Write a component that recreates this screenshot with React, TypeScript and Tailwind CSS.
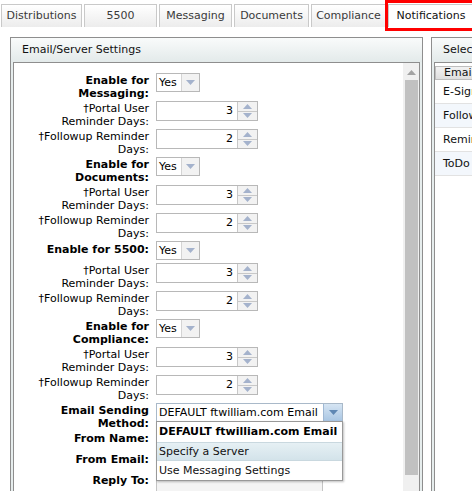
import React from 'react'

type Row = {
  label: React.ReactNode
  bold?: boolean
  kind: 'yes' | 'num' | 'method' | 'text'
  value?: number
  tall?: boolean
}

const rows: Row[] = [
  { label: <>Enable for<br />Messaging:</>, bold: true, kind: 'yes', tall: true },
  { label: <>†Portal User<br />Reminder Days:</>, kind: 'num', value: 3, tall: true },
  { label: <>†Followup Reminder<br />Days:</>, kind: 'num', value: 2, tall: true },
  { label: <>Enable for<br />Documents:</>, bold: true, kind: 'yes', tall: true },
  { label: <>†Portal User<br />Reminder Days:</>, kind: 'num', value: 3, tall: true },
  { label: <>†Followup Reminder<br />Days:</>, kind: 'num', value: 2, tall: true },
  { label: <>Enable for 5500:</>, bold: true, kind: 'yes' },
  { label: <>†Portal User<br />Reminder Days:</>, kind: 'num', value: 3, tall: true },
  { label: <>†Followup Reminder<br />Days:</>, kind: 'num', value: 2, tall: true },
  { label: <>Enable for<br />Compliance:</>, bold: true, kind: 'yes', tall: true },
  { label: <>†Portal User<br />Reminder Days:</>, kind: 'num', value: 3, tall: true },
  { label: <>†Followup Reminder<br />Days:</>, kind: 'num', value: 2, tall: true },
  { label: <>Email Sending<br />Method:</>, bold: true, kind: 'method', tall: true },
  { label: <>From Name:</>, bold: true, kind: 'text' },
  { label: <>From Email:</>, bold: true, kind: 'text' },
  { label: <>Reply To:</>, bold: true, kind: 'text' },
]

const tabs = [
  { name: 'Distributions', w: 'w-[81px]' },
  { name: '5500', w: 'w-[73px]' },
  { name: 'Messaging', w: 'w-[73px]' },
  { name: 'Documents', w: 'w-[75px]' },
  { name: 'Compliance', w: 'w-[75px]' },
]

function Arrow({ up, color = '#a4b2cc' }: { up?: boolean; color?: string }) {
  return (
    <svg width="9" height="5" viewBox="0 0 9 5">
      <path d={up ? 'M0 5 L4.5 0 L9 5 Z' : 'M0 0 L9 0 L4.5 5 Z'} fill={color} />
    </svg>
  )
}

function YesSelect() {
  return (
    <div className="flex h-[19px] w-[44px] border border-[#b8b8b8] bg-white">
      <div className="flex-1 pl-[2px] leading-[17px] text-[#000]">Yes</div>
      <div className="flex w-[18px] items-center justify-center border-l border-[#d4d4d4] bg-[#f2f2f2]">
        <Arrow />
      </div>
    </div>
  )
}

function Spinner({ value }: { value?: number }) {
  return (
    <div className="flex h-[20px] w-[102px] border border-[#b8b8b8] bg-white">
      <div className="flex-1 pr-[4px] text-right leading-[18px] text-[#000]">{value}</div>
      <div className="flex w-[20px] flex-col border-l border-[#c8c8c8]">
        <div className="flex flex-1 items-center justify-center border-b border-[#c8c8c8] bg-[#f2f2f2]">
          <Arrow up />
        </div>
        <div className="flex flex-1 items-center justify-center bg-[#f2f2f2]">
          <Arrow />
        </div>
      </div>
    </div>
  )
}

function MethodSelect() {
  return (
    <div className="relative">
      <div className="flex h-[19px] w-[187px] border border-[#a9b9c9] bg-white">
        <div className="flex-1 pl-[2px] leading-[17px] text-[#000]">DEFAULT ftwilliam.com Email</div>
        <div className="flex w-[19px] items-center justify-center border-l border-[#9fb8d4] bg-gradient-to-b from-[#d6e5f3] to-[#a9c6e3]">
          <Arrow color="#5f87b3" />
        </div>
      </div>
      {/* open dropdown list */}
      <div className="absolute left-0 top-[18px] z-10 w-[187px] border border-[#999] bg-white shadow-[1px_1px_2px_rgba(0,0,0,0.25)]">
        <div className="h-[20px] pl-[2px] font-bold leading-[19px] text-[#000]">DEFAULT ftwilliam.com Email</div>
        <div className="h-[19px] border-y border-[#c9d8df] bg-gradient-to-b from-[#e6f0f4] to-[#d3e3ea] pl-[2px] leading-[17px] text-[#111]">
          Specify a Server
        </div>
        <div className="h-[19px] pl-[2px] leading-[19px] text-[#111]">Use Messaging Settings</div>
      </div>
    </div>
  )
}

function Control({ row }: { row: Row }) {
  if (row.kind === 'yes') return <YesSelect />
  if (row.kind === 'num') return <Spinner value={row.value} />
  if (row.kind === 'method') return <MethodSelect />
  return <div className="h-[20px] w-[167px] border border-[#c4c4c4] bg-[#f4f4f4]" />
}

export default function App() {
  return (
    <div className="relative h-[491px] w-[472px] overflow-hidden bg-white font-['DejaVu_Sans',sans-serif] text-[11px]">
      {/* Tabs */}
      <div className="flex gap-[2px] pl-[1px] pt-[4px]">
        {tabs.map((t) => (
          <div
            key={t.name}
            className={`${t.w} flex h-[23px] shrink-0 items-center justify-center border border-b-0 border-[#c9c9c9] bg-gradient-to-b from-white to-[#ececec] text-[#3a3a3a]`}
          >
            {t.name}
          </div>
        ))}
        <div className="relative shrink-0">
          <div className="flex h-[23px] w-[86px] items-center justify-center border border-b-0 border-[#c9c9c9] bg-white text-[#111]">
            Notifications
          </div>
          <div className="pointer-events-none absolute left-[-3px] top-[-4px] h-[31px] w-[92px] border-[3px] border-[#ff0000]" />
        </div>
      </div>

      {/* Panels */}
      <div className="mt-[10px] flex gap-[8px] pl-[10px]">
        {/* Left panel */}
        <div className="flex h-[470px] w-[413px] shrink-0 flex-col border border-[#8e8e8e] bg-[#e6eded]">
          <div className="h-[24px] bg-gradient-to-b from-[#f9fbfb] to-[#e3eaea] pl-[11px] leading-[24px] text-[#111]">
            Email/Server Settings
          </div>
          <div className="mx-[2px] flex flex-1 border border-[#8e8e8e] bg-white">
            <div className="flex-1 pt-[10px]">
              {rows.map((row, i) => (
                <div
                  key={i}
                  className={`flex items-start gap-[7px] ${
                    row.tall ? 'h-[28px]' : row.kind === 'text' ? 'h-[21px]' : 'h-[22px]'
                  }`}
                >
                  <div
                    className={`w-[135px] text-right leading-[13px] text-[#000] ${row.bold ? 'font-bold' : ''} ${
                      row.tall || row.kind === 'text' ? 'pt-[1px]' : 'pt-[2px]'
                    }`}
                  >
                    {row.label}
                  </div>
                  <Control row={row} />
                </div>
              ))}
            </div>
            {/* Scrollbar */}
            <div className="flex w-[16px] flex-col items-center bg-[#f0f0f0]">
              <div className="flex h-[17px] items-center justify-center pt-[2px]">
                <Arrow up color="#a3a3a3" />
              </div>
              <div className="h-[395px] w-[13px] bg-[#c1c1c1]" />
            </div>
          </div>
        </div>

        {/* Right panel */}
        <div className="flex h-[470px] w-[200px] shrink-0 flex-col border border-[#8e8e8e] bg-[#e6eded]">
          <div className="h-[24px] bg-gradient-to-b from-[#f9fbfb] to-[#e3eaea] pl-[11px] leading-[24px] text-[#111]">
            Select Notification
          </div>
          <div className="mx-[2px] flex-1 border border-[#8e8e8e] bg-white pt-[3px]">
            <div className="h-[14px] border border-[#bdbdbd] bg-gradient-to-b from-[#f2f2f2] to-[#dedede] pl-[8px] leading-[12px] text-[#111]">
              Email Type
            </div>
            {['E-Signature', 'Followup Reminder', 'Reminder', 'ToDo'].map((r, i) => (
              <div
                key={r}
                className={`h-[24px] border-b border-[#e2e2e2] pl-[8px] leading-[24px] text-[#111] ${
                  i % 2 === 1 ? 'bg-[#f3f7fc]' : 'bg-white'
                }`}
              >
                {r}
              </div>
            ))}
          </div>
        </div>
      </div>
    </div>
  )
}
